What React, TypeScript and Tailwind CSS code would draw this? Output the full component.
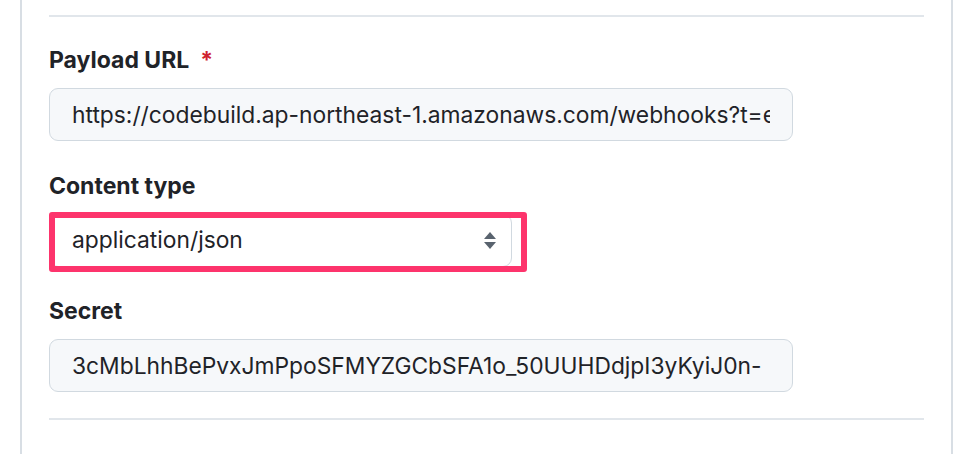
import React from "react";

function Label({ children, required }: { children: React.ReactNode; required?: boolean }) {
  return (
    <div className="text-[23px] leading-[30px] font-bold text-[#1f2328]">
      {children}
      {required && <span className="ml-[11px] text-[#cf222e]">*</span>}
    </div>
  );
}

export default function App() {
  return (
    <div
      className="w-[960px] h-[454px] bg-white overflow-hidden"
      style={{ fontFamily: "Inter, 'Liberation Sans', sans-serif" }}
    >
      <div className="ml-[20px] w-[933px] h-[454px] border-l-2 border-r-2 border-[#d8dee4] px-[27px] pt-[15px]">
        <div className="border-t-2 border-[#e1e6eb]" />
        <div className="mt-[28px]">
          <Label required>Payload URL</Label>
          <input
            readOnly
            value="https://codebuild.ap-northeast-1.amazonaws.com/webhooks?t=eyJlbmNyeXB0ZWREYXRh"
            className="mt-[13px] block w-[744px] h-[53px] rounded-[9px] border border-[#d1d9e0] bg-[#f6f8fa] px-[22px] text-[22.8px] text-[#1f2328] outline-none"
          />
        </div>
        <div className="mt-[30px]">
          <Label>Content type</Label>
          <div className="relative mt-[13px] w-[463px] h-[53px]">
            <div className="flex h-full w-full items-center justify-between rounded-[9px] border border-[#d1d9e0] bg-white pl-[22px] pr-[15px] text-[22.8px] text-[#1f2328]">
              <span>application/json</span>
              <svg width="12" height="17" viewBox="0 0 12 17" className="text-[#59636e]">
                <path d="M6 0 L12 7 L0 7 Z" fill="currentColor" />
                <path d="M6 17 L12 10 L0 10 Z" fill="currentColor" />
              </svg>
            </div>
            <div className="pointer-events-none absolute left-0 top-[-2px] w-[478px] h-[60px] rounded-[3px] border-[6px] border-[#fd346c]" />
          </div>
        </div>
        <div className="mt-[29px]">
          <Label>Secret</Label>
          <input
            readOnly
            value="3cMbLhhBePvxJmPpoSFMYZGCbSFA1o_50UUHDdjpI3yKyiJ0n-"
            className="mt-[13px] block w-[744px] h-[53px] rounded-[9px] border border-[#d1d9e0] bg-[#f6f8fa] px-[22px] text-[22.8px] text-[#1f2328] outline-none"
          />
        </div>
        <div className="mt-[26px] border-t-2 border-[#e1e6eb]" />
      </div>
    </div>
  );
}
